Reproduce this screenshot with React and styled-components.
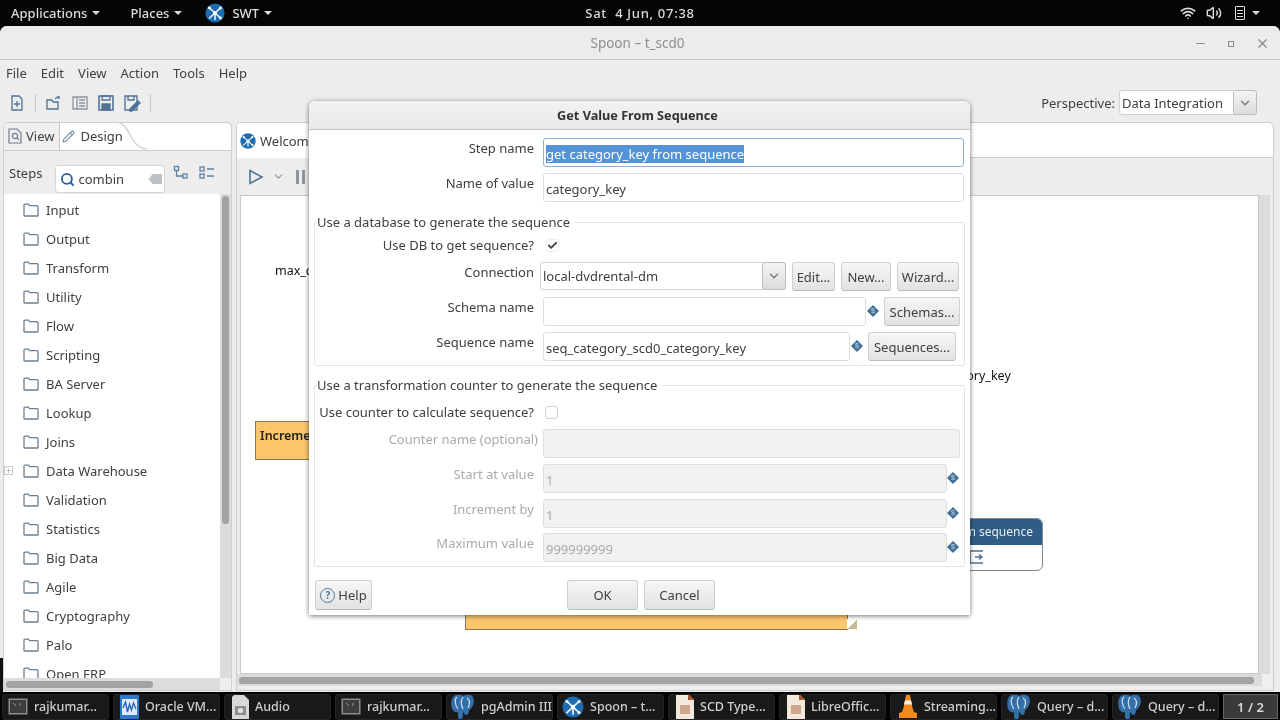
import React from "react";
import styled, { createGlobalStyle } from "styled-components";
import { Wifi, Volume2, Check, ChevronDown, Minus, X, Search, Pencil } from "lucide-react";

const FONT = `"Noto Sans", "Open Sans", sans-serif`;

const Global = createGlobalStyle`
  html, body { margin: 0; padding: 0; background: #000; }
  body { font-family: ${FONT}; font-size: 13px; color: #3c4143; }
  * { box-sizing: border-box; }
`;

/* ---------- icons ---------- */
const SpoonLogo = ({ size = 20 }) => (
  <svg width={size} height={size} viewBox="0 0 20 20">
    <circle cx="10" cy="10" r="9.6" fill="#1d6cb0" />
    <path d="M4 4.500 16 15.500M16 4.500 4 15.500M10 10 10 17" stroke="#e8f0f8" strokeWidth="1.6" />
    <circle cx="10" cy="10" r="2" fill="#fff" />
    <circle cx="4.500" cy="5" r="1.4" fill="#fff" />
    <circle cx="15.500" cy="5" r="1.4" fill="#fff" />
    <circle cx="15.500" cy="15" r="1.4" fill="#fff" />
  </svg>
);

const FolderIcon = () => (
  <svg width="16" height="14" viewBox="0 0 16 14" fill="#fff" stroke="#6f7f8f" strokeWidth="1.3">
    <path d="M1 12.400V2.200C1 1.600 1.400 1.200 2 1.200h3.400l1.200 1.400H14c.6 0 1 .4 1 1v8.800c0 .3-.3.6-.6.6H1.600c-.3 0-.6-.3-.6-.6Z" />
  </svg>
);

const VarIconSvg = () => (
  <svg width="12" height="12" viewBox="0 0 12 12">
    <path d="M6 0 12 6 6 12 0 6Z" fill="#3f6f96" />
    <text x="6" y="8.400" textAnchor="middle" fontSize="7" fill="#c9d9e6" fontFamily="Liberation Sans, sans-serif">$</text>
  </svg>
);

const ToolIcon = ({ children }) => (
  <svg width="18" height="18" viewBox="0 0 18 18" fill="none" stroke="#4f7396" strokeWidth="1.3">
    {children}
  </svg>
);

const TermIcon = () => (
  <svg width="20" height="17" viewBox="0 0 20 17">
    <rect x=".5" y=".5" width="19" height="16" fill="#8c8c8c" />
    <rect x="2" y="2" width="16" height="13" fill="#3d3d3d" />
    <path d="M5 5l3 3M12 5v3" stroke="#999" />
  </svg>
);

const VmIcon = () => (
  <svg width="19" height="24" viewBox="0 0 19 24">
    <rect width="19" height="24" rx="1" fill="#2a78d0" />
    <rect x="2" y="4" width="15" height="16" fill="#dfeaf6" />
    <path d="M3 13l2.500-6 2 10 2-8 2 6 2-7 2.500 6" stroke="#1c62b4" fill="none" strokeWidth="1.3" />
  </svg>
);

const AudioIcon = () => (
  <svg width="17" height="24" viewBox="0 0 17 24">
    <path d="M2 0h10l5 5v19H0V2Z" fill="#d9d9d9" />
    <rect x="3" y="11" width="11" height="9" fill="#8e8e8e" />
    <circle cx="8.500" cy="15.500" r="2.600" fill="#e2e2e2" />
  </svg>
);

const DocIcon = () => (
  <svg width="18" height="25" viewBox="0 0 18 25">
    <path d="M0 0h12l6 6v19H0Z" fill="#f3e8dc" />
    <path d="M12 0l6 6h-6Z" fill="#a9542a" />
    <rect x="4" y="11" width="10" height="9" fill="#cfa68c" />
  </svg>
);

const ConeIcon = () => (
  <svg width="20" height="25" viewBox="0 0 20 25">
    <path d="M8 1h4l3 15H5Z" fill="#f08a1c" />
    <path d="M7 6.500h6l1 4H6Z" fill="#f6f2ea" />
    <path d="M5 15h10l1 3 3 1v5H1v-5l3-1Z" fill="#f08a1c" />
  </svg>
);

const PgIcon = () => (
  <svg width="24" height="26" viewBox="0 0 24 26">
    <path d="M5 1c3-1 6 0 7 1 2-1 6-2 9 0 3 3 2 8 0 11-1 2-2 3-3 3 0 3-1 5-3 5-1 0-2-1-2-3l-1 1c0 3 0 5-1 6-2 1-4 0-4-3v-4c-2 1-4 0-6-3C0 11-1 3 5 1Z" fill="#336fa8" />
    <path d="M6 3c-3 2-2 8 1 12M12 3c-2 3-2 8 0 12M16 4c3 2 3 6 1 10" stroke="#d4e2f0" fill="none" strokeWidth="1.2" />
  </svg>
);

/* ---------- gnome panel ---------- */
const Screen = styled.div`
  position: relative;
  width: 1280px;
  height: 720px;
  overflow: hidden;
  background: #000;
  display: flex;
  flex-direction: column;
  filter: blur(0.35px);
`;

const TopBar = styled.div`
  height: 26px;
  flex: none;
  background: #050505;
  color: #dcdcdc;
  font-size: 13px;
  font-weight: 500;
  display: grid;
  grid-template-columns: 1fr auto 1fr;
  align-items: center;
  padding: 0 11px;
`;

const PanelLeft = styled.div`
  display: flex;
  align-items: center;
`;

const PanelItem = styled.span`
  display: inline-flex;
  align-items: center;
  gap: 7px;
  margin-right: ${({ $mr }) => $mr}px;
`;

const Caret = styled.i`
  display: inline-block;
  width: 0;
  height: 0;
  margin-left: -2px;
  border-left: 4px solid transparent;
  border-right: 4px solid transparent;
  border-top: 4px solid #dcdcdc;
`;

const Clock = styled.span`
  white-space: pre;
  letter-spacing: 0.7px;
`;

const Tray = styled.div`
  display: flex;
  justify-content: flex-end;
  align-items: center;
  gap: 10px;
  color: #dcdcdc;
  padding-right: 9px;
`;

const BatteryIcon = styled.span`
  width: 10px;
  height: 14px;
  border: 1.5px solid #dcdcdc;
  border-radius: 1px;
  margin: 0 -1px 0 3px;
  background: repeating-linear-gradient(#dcdcdc 0 1px, transparent 1px 3px);
  background-clip: content-box;
  padding: 1px;
`;

/* ---------- spoon window ---------- */
const Win = styled.div`
  flex: 1;
  min-height: 0;
  background: #ededed;
  border-radius: 7px 7px 0 0;
  display: flex;
  flex-direction: column;
`;

const WinTitle = styled.div`
  height: 34px;
  flex: none;
  position: relative;
  display: flex;
  align-items: center;
  justify-content: center;
  padding-right: 5px;
  color: #8d8f8f;
  font-size: 13.5px;
  background: #ececec;
  border-bottom: 1.5px solid #c4c4c4;
  border-radius: 7px 7px 0 0;
`;

const WinButtons = styled.div`
  position: absolute;
  right: 10px;
  top: 10px;
  display: flex;
  align-items: center;
  gap: 18px;
  color: #8a8c8c;
`;

const MaxBox = styled.span`
  width: 6px;
  height: 6px;
  margin: 0 3px;
  border: 1.5px solid #8a8c8c;
`;

const MenuBar = styled.div`
  height: 26px;
  flex: none;
  display: flex;
  align-items: center;
  padding-left: 6px;
  gap: 14px;
  font-size: 13px;
`;

const ToolBar = styled.div`
  height: 35px;
  flex: none;
  display: flex;
  align-items: center;
  padding: 0 23px 2px 8px;
  gap: 8px;
`;

const ToolSep = styled.span`
  width: 1px;
  height: 18px;
  margin: 0 1px;
  background: #c4c4c4;
`;

const Perspective = styled.div`
  margin-left: auto;
  display: flex;
  align-items: center;
  gap: 4px;
`;

const Combo = styled.div`
  display: flex;
  align-items: center;
  height: ${({ $h }) => $h}px;
  width: ${({ $w }) => ($w ? `${$w}px` : "auto")};
  flex: none;
  background: #fff;
  border: 1px solid #d0d0d0;
  border-radius: 3px;
  padding-left: 2px;
`;

const ComboText = styled.span`
  flex: 1;
  white-space: nowrap;
`;

const ComboArrow = styled.span`
  align-self: stretch;
  width: 24px;
  display: flex;
  align-items: center;
  justify-content: center;
  margin: -1px -1px -1px 0;
  background: linear-gradient(#f4f4f4, #dcdcdc);
  border: 1px solid #bdbdbd;
  border-radius: 3px;
  color: #7c7c7c;
`;

const Panes = styled.div`
  flex: 1;
  min-height: 0;
  display: flex;
  gap: 4px;
  padding: 1px 6px 1px 3px;
`;

const LeftPane = styled.div`
  width: 229px;
  flex: none;
  display: flex;
  flex-direction: column;
  border: 1px solid #cfcfcf;
  border-radius: 5px 5px 0 0;
`;

const RightPane = styled.div`
  flex: 1;
  min-width: 0;
  display: flex;
  flex-direction: column;
  padding-bottom: 4px;
  border: 1px solid #cfcfcf;
  border-radius: 5px 5px 0 0;
`;

const TabStrip = styled.div`
  height: ${({ $h }) => $h}px;
  flex: none;
  display: flex;
  align-items: ${({ $top }) => ($top ? "flex-start" : "center")};
  background: #fff;
  border-bottom: 1.5px solid #cbcbcb;
  border-radius: 5px 5px 0 0;
`;

const Tab = styled.div`
  height: ${({ $h }) => ($h ? `${$h}px` : "100%")};
  display: flex;
  align-items: center;
  gap: ${({ $gap = 4 }) => $gap}px;
  padding: 0 ${({ $pr }) => $pr}px 1px ${({ $pl }) => $pl}px;
  background: ${({ $dim }) => ($dim ? "#efefef" : "#fff")};
  border-right: ${({ $dim }) => ($dim ? "1px solid #c4c4c4" : "none")};
  border-radius: 4px 0 0 0;
`;

const DesignCurve = styled.svg`
  margin-left: -4px;
  flex: none;
  align-self: stretch;
`;

const StepsBar = styled.div`
  height: 43px;
  flex: none;
  display: flex;
  align-items: center;
  padding: 0 0 0 5px;
  background: #ededed;
`;

const SearchField = styled.div`
  width: 110px;
  height: 28px;
  margin: 0 8px 1px 13px;
  align-self: flex-end;
  display: flex;
  align-items: center;
  gap: 3px;
  padding: 0 2px 0 4px;
  background: #fff;
  border: 1px solid #d5d5d5;
  border-radius: 3px;
  color: #3c4143;
`;

const ClearGlyph = styled.span`
  margin-left: auto;
  width: 14px;
  height: 10px;
  background: #bcc2c6;
  clip-path: polygon(30% 0, 100% 0, 100% 100%, 30% 100%, 0 50%);
`;

const TreeWrap = styled.div`
  flex: 1;
  min-height: 0;
  display: flex;
  background: #fff;
`;

const TreeBody = styled.div`
  flex: 1;
  min-width: 0;
  overflow: hidden;
  padding-top: 1px;
`;

const TreeRow = styled.div`
  height: 29px;
  display: flex;
  align-items: center;
  gap: 7px;
  padding-left: 19px;
  position: relative;
`;

const Expander = styled.span`
  position: absolute;
  left: 0;
  top: 10px;
  width: 9px;
  height: 9px;
  border: 1px solid #c8c8c8;
  color: #9a9a9a;
  font-size: 9px;
  line-height: 7px;
  text-align: center;
`;

const VTrack = styled.div`
  width: ${({ $w }) => $w}px;
  flex: none;
  padding: 2px ${({ $pad }) => $pad}px;
  background: #dcdcdc;
`;

const VThumb = styled.div`
  height: ${({ $h }) => $h}px;
  background: #a3a3a3;
  border-radius: 3px;
`;

const HTrack = styled.div`
  height: 12px;
  flex: none;
  display: flex;
  align-items: center;
  padding-left: 2px;
  background: #dcdcdc;
`;

const HThumb = styled.div`
  width: ${({ $w }) => $w};
  height: 7px;
  background: #a3a3a3;
  border-radius: 3px;
`;

const ScrollCorner = styled.span`
  margin-left: auto;
  width: 11px;
  height: 100%;
  background: #efefef;
`;

const GraphBar = styled.div`
  height: 37px;
  flex: none;
  display: flex;
  align-items: center;
  gap: 8px;
  padding-left: 11px;
  background: #ededed;
  color: #4f7396;
`;

const PauseGlyph = styled.span`
  width: 9px;
  height: 14px;
  margin-left: 3px;
  border-left: 3px solid #8f9498;
  border-right: 3px solid #8f9498;
`;

const GraphArea = styled.div`
  flex: 1;
  min-height: 0;
  display: flex;
  padding: 0 3px 0 3px;
  background: #ededed;
`;

const Canvas = styled.div`
  flex: 1;
  position: relative;
  background: #fff;
  border: 1px solid #c8c8c8;
  overflow: hidden;
`;

const CanvasText = styled.span`
  position: absolute;
  left: ${({ $x }) => $x}px;
  top: ${({ $y }) => $y}px;
  color: #111;
  font-size: 12.5px;
  white-space: nowrap;
`;

const Note = styled.div`
  position: absolute;
  left: ${({ $x }) => $x}px;
  top: ${({ $y }) => $y}px;
  width: ${({ $w }) => $w}px;
  height: ${({ $h }) => $h}px;
  background: #fdc66d;
  border: 1px solid #8a7650;
  color: #222;
  font-size: 12.5px;
  font-weight: 600;
  padding: 5px 4px;
  white-space: nowrap;
  overflow: hidden;
`;

const Fold = styled.span`
  position: absolute;
  left: ${({ $x }) => $x}px;
  top: ${({ $y }) => $y}px;
  width: 10px;
  height: 10px;
  background: linear-gradient(135deg, #fff 50%, #c9b896 50%);
`;

const NodeBox = styled.div`
  position: absolute;
  left: 658px;
  top: 322px;
  width: 144px;
  height: 53px;
  background: #fff;
  border: 1px solid #7f8b96;
  border-radius: 6px;
  overflow: hidden;
`;

const NodeHead = styled.div`
  height: 26px;
  background: #2f5d84;
  color: #e8eef3;
  font-size: 12px;
  text-align: right;
  line-height: 26px;
  padding-right: 9px;
`;

const NodeGlyph = styled.svg`
  display: block;
  margin: 5px 0 0 69px;
`;

/* ---------- taskbar ---------- */
const TaskBar = styled.div`
  height: 28px;
  flex: none;
  display: flex;
  align-items: center;
  gap: 4px;
  padding: 1px 2px 0;
  background: #000;
`;

const TaskItem = styled.div`
  width: 107px;
  height: 26px;
  flex: none;
  display: flex;
  align-items: center;
  gap: 6px;
  padding-left: ${({ $pl }) => $pl}px;
  overflow: hidden;
  background: #191919;
  border: 1px solid #262626;
  border-radius: 3px;
  color: #cfcfcf;
  font-size: 12.5px;
  font-weight: 500;
  white-space: nowrap;
`;

const Pager = styled.div`
  flex: 1;
  height: 25px;
  display: flex;
  align-items: center;
  justify-content: center;
  background: #3a3a3a;
  border: 1px solid #666;
  color: #d8d8d8;
  font-size: 13px;
  font-weight: 600;
  white-space: pre;
`;

const CornerShade = styled.span`
  position: absolute;
  left: 0;
  top: 658px;
  width: 3px;
  height: 34px;
  background: #111;
`;

/* ---------- dialog ---------- */
const Dialog = styled.div`
  position: absolute;
  left: 309px;
  top: 101px;
  width: 661px;
  height: 514px;
  display: flex;
  flex-direction: column;
  background: #fff;
  border-radius: 6px 6px 0 0;
  box-shadow: 0 1px 5px rgba(0, 0, 0, 0.55);
`;

const DialogTitle = styled.div`
  height: 29px;
  flex: none;
  display: flex;
  align-items: center;
  justify-content: center;
  padding-right: 4px;
  background: linear-gradient(#f2f2f2, #e9e9e9);
  border-bottom: 1.5px solid #c6c6c6;
  border-radius: 6px 6px 0 0;
  color: #303436;
  font-size: 12.7px;
  font-weight: 700;
`;

const DialogBody = styled.div`
  flex: 1;
  display: flex;
  flex-direction: column;
  padding: 8px 5px 0;
`;

const Row = styled.div`
  display: flex;
  align-items: flex-start;
  height: ${({ $h = 29 }) => $h}px;
  margin-top: ${({ $mt = 6 }) => $mt}px;
  padding-right: ${({ $pr = 0 }) => $pr}px;
`;

const Label = styled.label`
  flex: none;
  width: ${({ $w = 219 }) => $w}px;
  margin-right: ${({ $gap = 9 }) => $gap}px;
  text-align: right;
  line-height: 20px;
  white-space: nowrap;
  color: ${({ $off }) => ($off ? "#a9abab" : "#3c4143")};
`;

const Field = styled.div`
  flex: 1;
  min-width: 0;
  height: 29px;
  display: flex;
  align-items: center;
  padding: 2px 2px 0;
  background: ${({ $off }) => ($off ? "#f1f1f0" : "#fff")};
  border: ${({ $focus }) => ($focus ? "1.5px solid #8fb0cf" : "1.5px solid #dedede")};
  border-radius: 3px;
  color: ${({ $off }) => ($off ? "#a9abab" : "#3c4143")};
  white-space: nowrap;
`;

const Selected = styled.span`
  background: #5293dc;
  color: #fff;
`;

const Tick = styled.span`
  width: 13px;
  height: 13px;
  margin: 4px 0 0 ${({ $ml = 1 }) => $ml}px;
  display: flex;
  align-items: center;
  justify-content: center;
  color: #44494b;
  border: 1.5px solid ${({ $on }) => ($on ? "#efefef" : "#cfd2d4")};
  border-radius: 3px;
`;

const VarSlot = styled.span`
  flex: none;
  width: 12px;
  height: 12px;
  margin: 8px ${({ $mr = 5 }) => $mr}px 0 ${({ $ml = 1 }) => $ml}px;
  display: flex;
`;

const Btn = styled.button`
  flex: none;
  width: ${({ $w }) => $w}px;
  height: ${({ $h = 29 }) => $h}px;
  margin-left: ${({ $ml = 0 }) => $ml}px;
  padding: 0;
  font: inherit;
  color: #3c4143;
  background: linear-gradient(#f6f6f6, #e2e2e2);
  border: 1px solid #d0d0d0;
  border-bottom-color: #bcbcbc;
  border-radius: 3px;
  display: inline-flex;
  align-items: center;
  justify-content: center;
  gap: 3px;
`;

const Group = styled.fieldset`
  margin: ${({ $mt }) => $mt}px 0 0;
  padding: 0 0 ${({ $pb }) => $pb}px;
  border: 1.5px solid #e2e2e2;
  border-radius: 2px;
  min-width: 0;
`;

const Legend = styled.legend`
  margin-left: 2px;
  padding: 0 5px 0 0;
  line-height: 16px;
  color: #3c4143;
`;

const Footer = styled.div`
  display: flex;
  align-items: center;
  margin: 13px 0 0 1px;
`;

const FooterCentre = styled.div`
  display: flex;
  gap: 6px;
  margin-left: 195px;
`;

const HelpRing = styled.span`
  width: 15px;
  height: 15px;
  display: inline-flex;
  align-items: center;
  justify-content: center;
  border: 1.5px solid #4f7396;
  border-radius: 50%;
  color: #4f7396;
  font-size: 10px;
  font-weight: 700;
`;

const MENUS = ["File", "Edit", "View", "Action", "Tools", "Help"];
const FOLDERS = [
  "Input", "Output", "Transform", "Utility", "Flow", "Scripting", "BA Server", "Lookup", "Joins",
  "Data Warehouse", "Validation", "Statistics", "Big Data", "Agile", "Cryptography", "Palo", "Open ERP",
];
const TASKS = [
  [TermIcon, "rajkumar...", 5], [VmIcon, "Oracle VM...", 6], [AudioIcon, "Audio", 7], [TermIcon, "rajkumar...", 5],
  [PgIcon, "pgAdmin III", 4], [() => <SpoonLogo size={22} />, "Spoon – t...", 4], [DocIcon, "SCD Type...", 7],
  [DocIcon, "LibreOffic...", 7], [ConeIcon, "Streaming...", 7], [PgIcon, "Query – d...", 5], [PgIcon, "Query – d...", 5],
];

const DisabledRow = ({ label, value, mt }) => (
  <Row $mt={mt} $pr={5}>
    <Label $off>{label}</Label>
    <Field $off>{value}</Field>
    <VarSlot $mr={0} $ml={0}><VarIconSvg /></VarSlot>
  </Row>
);

export default function App() {
  return (
    <Screen>
      <Global />
      <TopBar>
        <PanelLeft>
          <PanelItem $mr={30}>Applications <Caret /></PanelItem>
          <PanelItem $mr={23}>Places <Caret /></PanelItem>
          <PanelItem $mr={0}><SpoonLogo /> SWT <Caret /></PanelItem>
        </PanelLeft>
        <Clock>Sat  4 Jun, 07:38</Clock>
        <Tray>
          <Wifi size={16} strokeWidth={2.4} />
          <Volume2 size={16} strokeWidth={2.2} />
          <BatteryIcon />
          <Caret />
        </Tray>
      </TopBar>

      <Win>
        <WinTitle>
          Spoon – t_scd0
          <WinButtons>
            <Minus size={13} />
            <MaxBox />
            <X size={15} />
          </WinButtons>
        </WinTitle>
        <MenuBar>{MENUS.map((m) => <span key={m}>{m}</span>)}</MenuBar>
        <ToolBar>
          <ToolIcon><path d="M4 2h7l3 3v11H4Z" /><path d="M9 7v6M6 10h6" /></ToolIcon>
          <ToolSep />
          <ToolIcon><path d="M2 15V6h5l1 2h5v7ZM10 5l4-3M14 2v3" /></ToolIcon>
          <ToolIcon><path d="M2 3h14v12H2Z" stroke="#8a949c" /><path d="M6 3v12M8 6h6M8 9h6M8 12h6" stroke="#8a949c" /></ToolIcon>
          <ToolIcon><path d="M2 2h14v14H2Z" strokeWidth="1.6" /><path d="M5 10h8v6H5Z" fill="#4f7396" /><path d="M5 2h8v4H5Z" /></ToolIcon>
          <ToolIcon><path d="M2 2h12v14H2Z" /><path d="M5 2v4h6V2" /><path d="M7 15l8-8 2 2-8 8H7Z" fill="#4f7396" /></ToolIcon>
          <ToolSep />
          <Perspective>
            Perspective:
            <Combo $h={25} $w={138}>
              <ComboText>Data Integration</ComboText>
              <ComboArrow><ChevronDown size={14} strokeWidth={2.5} /></ComboArrow>
            </Combo>
          </Perspective>
        </ToolBar>

        <Panes>
          <LeftPane>
            <TabStrip $h={28}>
              <Tab $dim $pl={4} $pr={5}>
                <svg width="14" height="16" viewBox="0 0 14 16" fill="none" stroke="#6f7f8f" strokeWidth="1.2">
                  <path d="M1 1h8l4 4v10H1Z" /><circle cx="7" cy="8" r="2.600" /><path d="M9 10l2 2" />
                </svg>
                View
              </Tab>
              <Tab $pl={2} $pr={0} $gap={5}>
                <Pencil size={13} color="#6f8aa2" />
                Design
              </Tab>
              <DesignCurve width="28" height="27" viewBox="0 0 28 27" fill="none" stroke="#cbcbcb" strokeWidth="1.2">
                <path d="M0 0c10 0 12 26 28 26" />
              </DesignCurve>
            </TabStrip>
            <StepsBar>
              Steps
              <SearchField>
                <Search size={15} color="#2a5f9a" strokeWidth={3} />
                combin
                <ClearGlyph />
              </SearchField>
              <svg width="16" height="16" viewBox="0 0 16 16" fill="none" stroke="#5f7f9c" strokeWidth="1.3">
                <rect x="1.500" y="1.500" width="4" height="4" /><rect x="10" y="9" width="4" height="4" /><path d="M3.500 6v5H10" />
              </svg>
              <svg width="16" height="16" viewBox="0 0 16 16" fill="none" stroke="#5f7f9c" strokeWidth="1.3" style={{ marginLeft: 10 }}>
                <rect x="1" y="2" width="4" height="4" /><rect x="1" y="9" width="4" height="4" /><path d="M8 4h7M8 11h7" />
              </svg>
            </StepsBar>
            <TreeWrap>
              <TreeBody>
                {FOLDERS.map((f) => (
                  <TreeRow key={f}>
                    {f === "Data Warehouse" && <Expander>+</Expander>}
                    <FolderIcon />
                    {f}
                  </TreeRow>
                ))}
              </TreeBody>
              <VTrack $w={11} $pad={2}><VThumb $h={328} /></VTrack>
            </TreeWrap>
            <HTrack><HThumb $w="147px" /><ScrollCorner /></HTrack>
          </LeftPane>

          <RightPane>
            <TabStrip $h={35} $top>
              <Tab $pl={3} $pr={0} $h={36}>
                <SpoonLogo size={16} />
                Welcome!
              </Tab>
            </TabStrip>
            <GraphBar>
              <svg width="16" height="16" viewBox="0 0 16 16" fill="none" stroke="#4f7396" strokeWidth="1.6"><path d="M2 1.500 14 8 2 14.500Z" /></svg>
              <ChevronDown size={13} color="#8f9498" />
              <PauseGlyph />
            </GraphBar>
            <GraphArea>
              <Canvas>
                <CanvasText $x={34} $y={66}>max_category_key</CanvasText>
                <CanvasText $x={693} $y={171}>category_key</CanvasText>
                <Note $x={14} $y={225} $w={200} $h={39}>Increment</Note>
                <Note $x={224} $y={395} $w={383} $h={39} />
                <Fold $x={606} $y={423} />
                <NodeBox>
                  <NodeHead>from sequence</NodeHead>
                  <NodeGlyph width="16" height="14" viewBox="0 0 16 14" fill="none" stroke="#4f7396" strokeWidth="1.5">
                    <path d="M14 1H1v12h13M6 7h7M10 4.500 13 7l-3 2.500" />
                  </NodeGlyph>
                </NodeBox>
              </Canvas>
              <VTrack $w={11} $pad={2} />
            </GraphArea>
            <HTrack><HThumb $w="1015px" /><ScrollCorner /></HTrack>
          </RightPane>
        </Panes>
      </Win>

      <TaskBar>
        {TASKS.map(([Icon, name, pl], i) => (
          <TaskItem key={i} $pl={pl}><Icon />{name}</TaskItem>
        ))}
        <Pager>1 / 2</Pager>
      </TaskBar>
      <CornerShade />

      <Dialog>
        <DialogTitle>Get Value From Sequence</DialogTitle>
        <DialogBody>
          <Row $mt={0} $pr={1}>
            <Label $w={220}>Step name</Label>
            <Field $focus><Selected>get category_key from sequence</Selected></Field>
          </Row>
          <Row $pr={1}>
            <Label $w={220}>Name of value</Label>
            <Field>category_key</Field>
          </Row>

          <Group $mt={12} $pb={4}>
            <Legend>Use a database to generate the sequence</Legend>
            <Row $mt={5} $h={16}>
              <Label>Use DB to get sequence?</Label>
              <Tick $on $ml={3}><Check size={13} strokeWidth={4} /></Tick>
            </Row>
            <Row $mt={11} $pr={4}>
              <Label $gap={6}>Connection</Label>
              <Combo $h={28} $w={246}>
                <ComboText>local-dvdrental-dm</ComboText>
                <ComboArrow><ChevronDown size={14} strokeWidth={2.5} /></ComboArrow>
              </Combo>
              <Btn $w={43} $ml={6}>Edit...</Btn>
              <Btn $w={50} $ml={6}>New...</Btn>
              <Btn $w={62} $ml={6}>Wizard...</Btn>
            </Row>
            <Row $pr={4}>
              <Label>Schema name</Label>
              <Field />
              <VarSlot><VarIconSvg /></VarSlot>
              <Btn $w={76}>Schemas...</Btn>
            </Row>
            <Row $pr={8}>
              <Label>Sequence name</Label>
              <Field>seq_category_scd0_category_key</Field>
              <VarSlot><VarIconSvg /></VarSlot>
              <Btn $w={88}>Sequences...</Btn>
            </Row>
          </Group>

          <Group $mt={11} $pb={4}>
            <Legend>Use a transformation counter to generate the sequence</Legend>
            <Row $mt={9} $h={16}>
              <Label>Use counter to calculate sequence?</Label>
              <Tick $ml={2} />
            </Row>
            <Row $mt={11} $pr={4}>
              <Label $off $w={223} $gap={5}>Counter name (optional)</Label>
              <Field $off />
            </Row>
            <DisabledRow label="Start at value" value="1" />
            <DisabledRow label="Increment by" value="1" />
            <DisabledRow label="Maximum value" value="999999999" mt={5} />
          </Group>

          <Footer>
            <Btn $w={57} $h={30}><HelpRing>?</HelpRing>Help</Btn>
            <FooterCentre>
              <Btn $w={71} $h={30}>OK</Btn>
              <Btn $w={71} $h={30}>Cancel</Btn>
            </FooterCentre>
          </Footer>
        </DialogBody>
      </Dialog>
    </Screen>
  );
}
